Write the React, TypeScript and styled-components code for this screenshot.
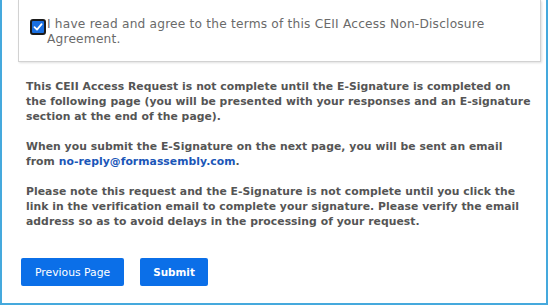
import React from "react";
import styled, { createGlobalStyle } from "styled-components";

const Global = createGlobalStyle`
  html, body { margin: 0; padding: 0; background: #fff; }
  body { font-family: "DejaVu Sans", "Open Sans", sans-serif; }
`;

const Frame = styled.div`
  box-sizing: border-box;
  width: 548px;
  height: 305px;
  border: 2px solid #45a9dd;
  border-top: none;
  background: #fff;
  padding: 0 6px 0 16px;
  display: flex;
  flex-direction: column;
`;

const Card = styled.div`
  box-sizing: border-box;
  width: 523px;
  height: 62px;
  border: 1px solid #d2d2d2;
  border-top: none;
  box-shadow: 1px 1px 2px rgba(0, 0, 0, 0.12);
  padding: 17px 10px 0 11px;
  display: flex;
  align-items: flex-start;
`;

const Box = styled.span`
  box-sizing: border-box;
  flex: none;
  width: 16px;
  height: 16px;
  margin-top: 2px;
  border: 2px solid #1b1b1b;
  border-radius: 3px;
  background: #1a6fe0;
  display: flex;
  align-items: center;
  justify-content: center;
`;

const AgreeText = styled.span`
  font-family: "DejaVu Sans", sans-serif;
  font-size: 12.2px;
  line-height: 15px;
  color: #6a6a6a;
  margin-left: 1px;
  letter-spacing: 0.2px;
`;

const Body = styled.div`
  padding: 17px 0 0 8px;
  display: flex;
  flex-direction: column;
  gap: 15px;
`;

const Para = styled.p`
  margin: 0;
  font-family: "DejaVu Sans", sans-serif;
  font-weight: bold;
  font-size: 10.8px;
  line-height: 15px;
  color: #555;
  letter-spacing: 0.05px;
`;

const Link = styled.a`
  color: #1a56b8;
  text-decoration: none;
`;

const Buttons = styled.div`
  display: flex;
  gap: 16px;
  margin-top: 29px;
  padding-left: 3px;
`;

const Button = styled.button<{ $bold?: boolean }>`
  box-sizing: border-box;
  height: 28px;
  padding: 0 ${(p) => (p.$bold ? "13px" : "14px")};
  border: none;
  border-radius: 2px;
  background: #0b6fe8;
  color: #fff;
  font-family: "DejaVu Sans", sans-serif;
  font-size: ${(p) => (p.$bold ? "10.4px" : "10.8px")};
  font-weight: ${(p) => (p.$bold ? 700 : 400)};
  cursor: pointer;
`;

export default function App() {
  return (
    <>
      <Global />
      <Frame>
        <Card>
          <Box>
            <svg width="10" height="10" viewBox="0 0 10 10">
              <path d="M1.5 5.2 L4 7.6 L8.6 2.2" stroke="#fff" strokeWidth="1.8" fill="none" strokeLinecap="round" strokeLinejoin="round" />
            </svg>
          </Box>
          <AgreeText>
            I have read and agree to the terms of this CEII Access Non-Disclosure
            <br />
            Agreement.
          </AgreeText>
        </Card>
        <Body>
          <Para>
            This CEII Access Request is not complete until the E-Signature is completed on
            <br />
            the following page (you will be presented with your responses and an E-signature
            <br />
            section at the end of the page).
          </Para>
          <Para>
            When you submit the E-Signature on the next page, you will be sent an email
            <br />
            from <Link href="#">no-reply@formassembly.com</Link>.
          </Para>
          <Para>
            Please note this request and the E-Signature is not complete until you click the
            <br />
            link in the verification email to complete your signature. Please verify the email
            <br />
            address so as to avoid delays in the processing of your request.
          </Para>
        </Body>
        <Buttons>
          <Button>Previous Page</Button>
          <Button $bold>Submit</Button>
        </Buttons>
      </Frame>
    </>
  );
}
